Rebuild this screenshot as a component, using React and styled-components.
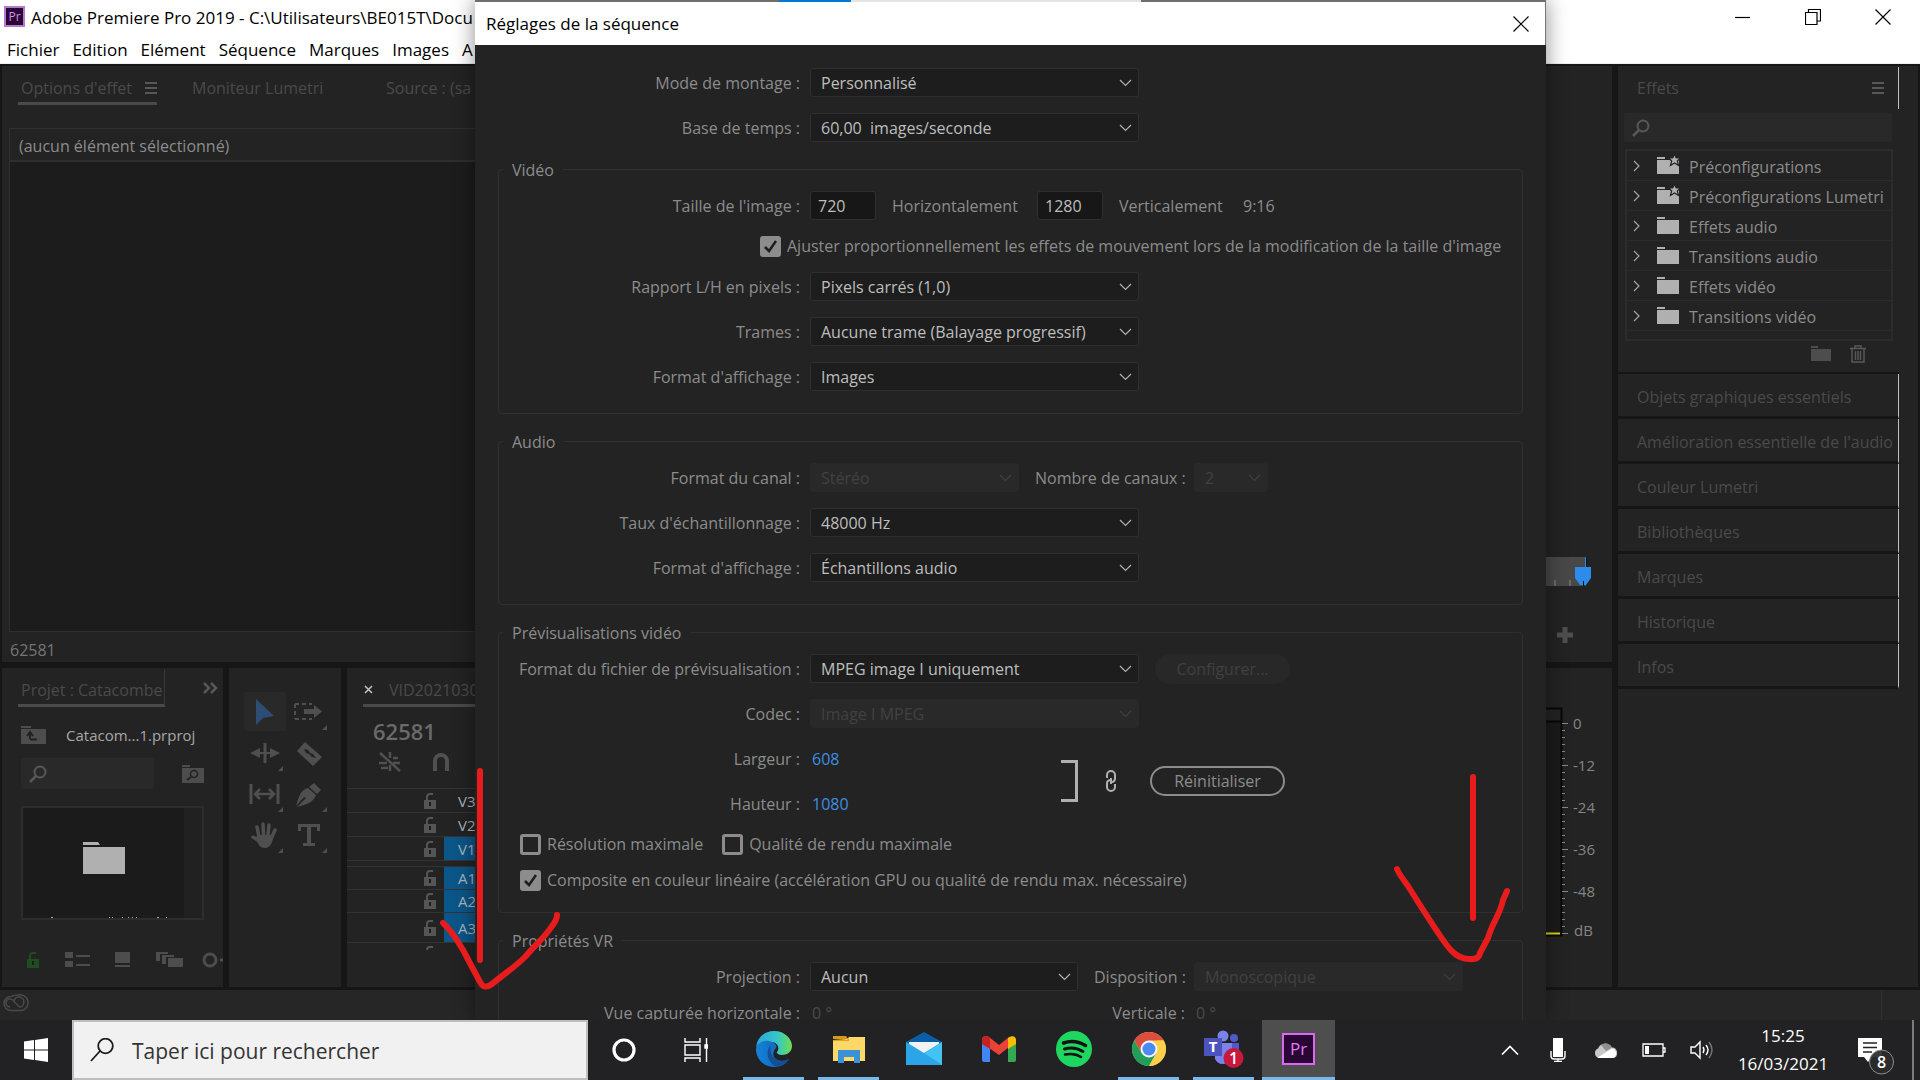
import React from "react";
import styled, { createGlobalStyle } from "styled-components";

const effects = [
  { name: "Préconfigurations", star: true },
  { name: "Préconfigurations Lumetri", star: true },
  { name: "Effets audio" },
  { name: "Transitions audio" },
  { name: "Effets vidéo" },
  { name: "Transitions vidéo" },
];

const closedPanels = [
  "Objets graphiques essentiels",
  "Amélioration essentielle de l'audio",
  "Couleur Lumetri",
  "Bibliothèques",
  "Marques",
  "Historique",
  "Infos",
];

const menus = ["Fichier", "Edition", "Elément", "Séquence", "Marques", "Images", "A"];

const tracks = [
  { name: "V3", height: 24 },
  { name: "V2", height: 24 },
  { name: "V1", height: 24, on: true },
  { name: "", height: 6 },
  { name: "A1", height: 23, on: true },
  { name: "A2", height: 23, on: true },
  { name: "A3", height: 30, on: true },
];

export default function App() {
  return (
    <Screen>
      <GlobalStyle />
      <Desktop>
        <TitleBar>
          <PrBadge />
          <AppTitle>Adobe Premiere Pro 2019 - C:\Utilisateurs\BE015T\Docu</AppTitle>
          <WindowButtons />
        </TitleBar>
        <MenuBar>
          {menus.map((m) => (
            <MenuItem key={m}>{m}</MenuItem>
          ))}
        </MenuBar>
        <Workspace>
          <MainColumn>
            <TopPanels>
              <EffectOptions />
              <Monitor />
            </TopPanels>
            <BottomPanels>
              <Project />
              <Tools />
              <Timeline />
              <Meters />
            </BottomPanels>
          </MainColumn>
          <SideColumn />
        </Workspace>
        <StatusBar>
          <CloudIcon />
          <StatusEnd />
        </StatusBar>
        <SequenceDialog />
      </Desktop>
      <Taskbar />
      <Drawing viewBox="0 0 1920 1080" aria-hidden="true">
        <path d="M480 771V960" />
        <path d="M443 923C450 929 456 938 463 950L480 982Q484 990 492 984C504 974 515 967 525 957C536 944 546 936 552 926Q557 920 557 915" />
        <path d="M1473 777V918" />
        <path d="M1397 869Q1399 874 1408 886C1418 902 1428 918 1439 934C1448 948 1456 959 1469 959Q1479 960 1480 953L1488 938C1492 923 1500 915 1503 900L1507 891" />
      </Drawing>
    </Screen>
  );
}

/* Windows around the application */

function WindowButtons() {
  return (
    <WinButtons>
      <WinButton aria-label="Réduire">
        <Line16 viewBox="0 0 16 16"><path d="M0 8.5h15" /></Line16>
      </WinButton>
      <WinButton aria-label="Restaurer">
        <Line16 viewBox="0 0 16 16"><path d="M.5 3.500h11.500v12h-11.500zM3.500 3.500v-3h12v11.500h-3" /></Line16>
      </WinButton>
      <WinButton aria-label="Fermer">
        <Line16 viewBox="0 0 16 16"><path d="M.5 .5l15 15M15.500 .5l-15 15" /></Line16>
      </WinButton>
    </WinButtons>
  );
}

function EffectOptions() {
  return (
    <OptionsPanel>
      <Tabs>
        <Tab $active $w="139px">
          Options d'effet
          <Burger />
        </Tab>
        <Tab $w="162px">Moniteur Lumetri</Tab>
        <Tab>Source : (sa</Tab>
      </Tabs>
      <OptionsBox>
        <OptionsHead>(aucun élément sélectionné)</OptionsHead>
      </OptionsBox>
      <Timecode>62581</Timecode>
    </OptionsPanel>
  );
}

function Monitor() {
  return (
    <MonitorPanel>
      <Ruler>
        <svg width="60" height="29" viewBox="0 0 60 29">
          <path d="M9 23v6M24 23v6M39 23v6" stroke="#8a8a8a" />
          <path d="M54.500 0v12" stroke="#2d8ceb" />
          <path d="M55.500 0v12" stroke="#111" />
          <path d="M44 10h16v11l-5 7h-6l-5-7z" fill="#2d8ceb" />
          <path d="M52.500 24v5" stroke="#111" />
        </svg>
      </Ruler>
      <PlainButton aria-label="Ajouter">
        <svg width="18" height="18" viewBox="0 0 18 18"><path d="M9 1v16M1 9h16" stroke="#4e4e4e" strokeWidth="5" /></svg>
      </PlainButton>
    </MonitorPanel>
  );
}

function Project() {
  return (
    <ProjectPanel>
      <ProjectTabs>
        <Tab $active $w="147px" $line>Projet : Catacombe</Tab>
        <svg width="16" height="12" viewBox="0 0 16 12" fill="none" stroke="#585858" strokeWidth="2.500"><path d="M1 1l5 5-5 5M8 1l5 5-5 5" /></svg>
      </ProjectTabs>
      <ProjectBody>
        <ProjectName>
          <svg width="25" height="20" viewBox="0 0 25 20">
            <path d="M0 1h10v2H0zM0 4h25v15H0z" fill="#4d4d4d" />
            <path d="M9 14V8M6 11l3-4 3 4M9 14.500h7" stroke="#222" strokeWidth="2" fill="none" />
          </svg>
          Catacom...1.prproj
        </ProjectName>
        <ProjectSearch>
          <SearchBox $w="133px">
            <Magnifier />
            <input type="text" aria-label="Rechercher dans le projet" />
          </SearchBox>
          <svg width="22" height="18" viewBox="0 0 22 18">
            <path d="M0 0h8v2H0zM0 3h22v15H0z" fill="#4d4d4d" />
            <circle cx="12" cy="9" r="3.500" fill="none" stroke="#222" strokeWidth="1.500" />
            <path d="M9 12l-4 3" stroke="#222" strokeWidth="2" />
          </svg>
        </ProjectSearch>
        <Bin>
          <svg width="161" height="110" viewBox="0 0 161 110">
            <path d="M60 34h15l2 3H60zM60 39h42v27H60z" fill="#b0b0b0" />
            <path d="M28 109.500h2M86 109.500h1M89 109.500h1M99 109.500h1M105 109.500h1M109 109.500h1M113 109.500h1M134 109.500h2M143 109.500h1" stroke="#aaa" />
          </svg>
        </Bin>
      </ProjectBody>
      <ProjectFooter>
        <Lock $green />
        <svg width="25" height="16" viewBox="0 0 25 16" fill="#4d4d4d"><path d="M0 0h8v6H0zM0 9h8v6H0zM11 3h14v2H11zM11 12h14v2H11z" /></svg>
        <svg width="16" height="16" viewBox="0 0 16 16" fill="#4d4d4d"><path d="M0 0h15v11H0zM0 13h15v2H0z" /></svg>
        <ZoomGroup>
          <svg width="28" height="16" viewBox="0 0 28 16" fill="#4d4d4d"><path d="M0 0h12v2H4v7H0zM6 3h12v2h-8v7H6zM12 6h15v9H12z" /></svg>
          <svg width="22" height="16" viewBox="0 0 22 16"><circle cx="8" cy="8" r="6" fill="none" stroke="#4d4d4d" strokeWidth="3" /><path d="M18 8h4" stroke="#4d4d4d" strokeWidth="3" /></svg>
        </ZoomGroup>
      </ProjectFooter>
    </ProjectPanel>
  );
}

const toolIcons = [
  { name: "Sélection", on: true, art: <path d="M7 3v26l7-7 11-2z" fill="#2d4d74" /> },
  {
    name: "Sélection en avant",
    art: (
      <>
        <path d="M2 8h17M2 8v15M2 23h17" fill="none" stroke="#4f4f4f" strokeWidth="2" strokeDasharray="4 3" />
        <path d="M11 13h10V9l8 6.500-8 6.500v-4H11z" fill="#4f4f4f" />
      </>
    ),
    corner: true,
  },
  {
    name: "Propagation",
    art: <path d="M1 16l10-5v4h3.500V6h3v9H21v-4l10 5-10 5v-4h-3.500v9h-3v-9H11v4z" fill="#4f4f4f" />,
    corner: true,
  },
  {
    name: "Cutter",
    art: (
      <>
        <path d="M12 5l17 15-9 9L4 14z" fill="#4f4f4f" />
        <path d="M11 12l4 1 2 3 3 1 3 4-4-1-3-3-3-1z" fill="#222" />
      </>
    ),
  },
  {
    name: "Déplacer dessous",
    art: (
      <>
        <path d="M2 6v20M29 6v20" stroke="#4f4f4f" strokeWidth="3" />
        <path d="M6 16h19M11 11l-5 5 5 5M20 11l5 5-5 5" fill="none" stroke="#4f4f4f" strokeWidth="2.500" />
      </>
    ),
    corner: true,
  },
  {
    name: "Plume",
    art: (
      <>
        <path d="M21 5l7 7-4 4-8-7zM15 10l8 7c-3 8-9 9-19 12l9-9-2-1-8 9C6 19 7 12 15 10z" fill="#4f4f4f" />
      </>
    ),
    corner: true,
  },
  {
    name: "Main",
    art: (
      <>
        <path d="M10 18L8 8M14.500 16L14 5M19 16l1-10M22 20l4-9M10 22l-6-4" stroke="#4f4f4f" strokeWidth="3.500" strokeLinecap="round" />
        <path d="M8 16h14l2 1c0 5-2 12-8 12s-7-5-9-9z" fill="#4f4f4f" />
      </>
    ),
    corner: true,
  },
  { name: "Texte", art: <path d="M5 5h22v7h-3V8h-6v16h4v3H10v-3h4V8H8v4H5z" fill="#4f4f4f" />, corner: true },
];

function Tools() {
  return (
    <ToolsPanel>
      {toolIcons.map((t) => (
        <ToolButton key={t.name} aria-label={t.name} $on={t.on}>
          <svg width="36" height="36" viewBox="-2 -2 36 36">
            {t.art}
            {t.corner && <path d="M34 29v5h-5z" fill="#4f4f4f" />}
          </svg>
        </ToolButton>
      ))}
    </ToolsPanel>
  );
}

function Timeline() {
  return (
    <TimelinePanel>
      <TimelineTabs>
        <TimelineTab>
          <svg width="9" height="9" viewBox="0 0 9 9" stroke="#c4c4c4" strokeWidth="1.500"><path d="M1 1l7 7M8 1l-7 7" /></svg>
          <span>VID2021030</span>
        </TimelineTab>
      </TimelineTabs>
      <BigTimecode>62581</BigTimecode>
      <TimelineIcons>
        <svg width="22" height="20" viewBox="0 0 22 20" stroke="#505050" strokeWidth="2.500"><path d="M1 1l20 18M8 11H0M2 16h7M11 0v6M14 11h7M11 13v6M14 6h5" fill="none" /></svg>
        <svg width="18" height="20" viewBox="0 0 18 20" fill="none" stroke="#505050" strokeWidth="4"><path d="M3 19V9a6 6 0 0 1 12 0v10" /></svg>
      </TimelineIcons>
      <TrackList>
        {tracks.map((t) => (
          <Track key={t.name} $h={t.height}>
            {t.name && (
              <>
                <Lock />
                <TrackName $on={t.on}>{t.name}</TrackName>
              </>
            )}
          </Track>
        ))}
        <CutTrack>
          <Lock />
        </CutTrack>
      </TrackList>
    </TimelinePanel>
  );
}

function Meters() {
  const labels = ["0", "-12", "-24", "-36", "-48"];
  const ticks = [];
  for (let i = 0; i <= 30; i++) ticks.push(i);
  return (
    <MetersPanel>
      <svg width="100" height="240" viewBox="0 0 100 240">
        <rect x="0" y="15" width="49" height="213" fill="#1b1b1b" />
        <path d="M0 1.500h49.500v227H0M0 14.500h49" fill="none" stroke="#080808" strokeWidth="2" />
        <path d="M0 226.500h48" stroke="#d9d313" strokeWidth="2" />
        {ticks.map((i) => (
          <path key={i} d={`M50 ${i * 7 + 16}.5h${i % 6 ? 3 : 6}`} stroke="#858585" />
        ))}
        {labels.map((l, i) => (
          <text key={l} x="61" y={i * 42 + 22}>{l}</text>
        ))}
        <text x="62" y="229">dB</text>
      </svg>
    </MetersPanel>
  );
}

function SideColumn() {
  return (
    <Side>
      <SideHead>
        Effets
        <Burger />
      </SideHead>
      <SideSearch>
        <Magnifier />
        <input type="text" aria-label="Rechercher un effet" />
      </SideSearch>
      <EffectList>
        {effects.map((e) => (
          <EffectRow key={e.name}>
            <svg width="7" height="12" viewBox="0 0 7 12" fill="none" stroke="#a5a5a5" strokeWidth="1.200"><path d="M1 1l5 5-5 5" /></svg>
            <svg width="24" height="24" viewBox="0 0 24 24">
              <path d="M0 3h8v2H0zM0 6h22v14H0z" fill="#b0b0b0" />
              {e.star && (
                <path d="M17.500 0l1.700 4h4.300l-3.200 3 1.200 4.500-4-2.500-4 2.500L14.700 7l-3.200-3h4.300z" fill="#b0b0b0" stroke="#222" strokeWidth="1.200" />
              )}
            </svg>
            <span>{e.name}</span>
          </EffectRow>
        ))}
      </EffectList>
      <EffectFooter>
        <svg width="20" height="17" viewBox="0 0 20 17" fill="#4d4d4d"><path d="M0 1h7v2H0zM0 4h20v12H0z" /></svg>
        <svg width="16" height="18" viewBox="0 0 16 18" fill="none" stroke="#5a5a5a" strokeWidth="1.400"><path d="M0 3.500h16M5 3V1h6v2M2 4v13h12V4M5.500 6v9M8 6v9M10.500 6v9" /></svg>
      </EffectFooter>
      {closedPanels.map((p) => (
        <ClosedPanel key={p}>{p}</ClosedPanel>
      ))}
    </Side>
  );
}

/* Sequence settings */

function SelectField({ id, value, width, disabled, label }) {
  return (
    <SelectWrap $w={width}>
      <Select id={id} disabled={disabled} aria-label={label} defaultValue={value}>
        <option value={value}>{value}</option>
      </Select>
      <svg width="13" height="8" viewBox="0 0 13 8" fill="none" stroke={disabled ? "#404040" : "#b0b0b0"} strokeWidth="1.200"><path d="M1 1l5.500 5.500L12 1" /></svg>
    </SelectWrap>
  );
}

function Row({ label, id, children, short }) {
  return (
    <Field $short={short}>
      <Label htmlFor={id}>{label}</Label>
      <Controls>{children}</Controls>
    </Field>
  );
}

function Check({ id, label, checked }) {
  return (
    <CheckLabel htmlFor={id}>
      <CheckBox>
        <input type="checkbox" id={id} defaultChecked={checked} />
        {checked && (
          <svg width="13" height="13" viewBox="0 0 13 13" fill="none" stroke="#1e1e1e" strokeWidth="2.500"><path d="M1 7l4 4 7-10" /></svg>
        )}
      </CheckBox>
      {label}
    </CheckLabel>
  );
}

function SequenceDialog() {
  return (
    <Dialog role="dialog" aria-label="Réglages de la séquence">
      <DialogEdge />
      <DialogTitle>
        Réglages de la séquence
        <DialogClose aria-label="Fermer la boîte de dialogue">
          <Line16 viewBox="0 0 16 16"><path d="M.5 .5l15 15M15.500 .5l-15 15" /></Line16>
        </DialogClose>
      </DialogTitle>
      <DialogBody>
        <TopRows>
          <Row label="Mode de montage :" id="mode"><SelectField id="mode" value="Personnalisé" /></Row>
          <Row label="Base de temps :" id="base"><SelectField id="base" value={"60,00\u00a0 images/seconde"} /></Row>
        </TopRows>

        <Group>
          <legend>Vidéo</legend>
          <Rows>
            <Row label="Taille de l'image :" id="imgw">
              <NumberInput id="imgw" type="text" defaultValue="720" />
              <Unit $w="129px">Horizontalement</Unit>
              <NumberInput type="text" defaultValue="1280" aria-label="Verticalement" />
              <Unit $w="108px">Verticalement</Unit>
              <Unit>9:16</Unit>
            </Row>
            <Checks $indent="261px">
              <Check id="scale" checked label="Ajuster proportionnellement les effets de mouvement lors de la modification de la taille d'image" />
            </Checks>
            <Row label="Rapport L/H en pixels :" id="ratio"><SelectField id="ratio" value="Pixels carrés (1,0)" /></Row>
            <Row label="Trames :" id="fields"><SelectField id="fields" value="Aucune trame (Balayage progressif)" /></Row>
            <Row label="Format d'affichage :" id="vformat"><SelectField id="vformat" value="Images" /></Row>
          </Rows>
        </Group>

        <Group>
          <legend>Audio</legend>
          <Rows>
            <Row label="Format du canal :" id="channel">
              <SelectField id="channel" value="Stéréo" width="209px" disabled />
              <InlineLabel htmlFor="count" $w="150px">Nombre de canaux :</InlineLabel>
              <SelectField id="count" value="2" width="74px" disabled />
            </Row>
            <Row label="Taux d'échantillonnage :" id="rate"><SelectField id="rate" value="48000 Hz" /></Row>
            <Row label="Format d'affichage :" id="aformat"><SelectField id="aformat" value="Échantillons audio" /></Row>
          </Rows>
        </Group>

        <Group>
          <legend>Prévisualisations vidéo</legend>
          <Rows>
            <Row label="Format du fichier de prévisualisation :" id="preview">
              <SelectField id="preview" value="MPEG image I uniquement" />
              <PillButton disabled>Configurer...</PillButton>
            </Row>
            <Row label="Codec :" id="codec"><SelectField id="codec" value="Image I MPEG" disabled /></Row>
            <SizeBlock>
              <Rows>
                <Row label="Largeur :" id="pw"><HotValue id="pw">608</HotValue></Row>
                <Row label="Hauteur :" id="ph"><HotValue id="ph">1080</HotValue></Row>
              </Rows>
              <svg width="17" height="42" viewBox="0 0 17 42" fill="none" stroke="#b0b0b0" strokeWidth="3"><path d="M0 1.500h15.500v39H0" /></svg>
              <svg width="12" height="22" viewBox="0 0 12 22" fill="none" stroke="#b0b0b0" strokeWidth="2"><path d="M2 8V5a3.500 3.500 0 0 1 8 0v4a3.500 3.500 0 0 1-4 3M10 14v3a3.500 3.500 0 0 1-8 0v-4a3.500 3.500 0 0 1 4-3M6 8v6" /></svg>
              <PillButton>Réinitialiser</PillButton>
            </SizeBlock>
            <Checks $indent="21px">
              <Check id="maxres" label="Résolution maximale" />
              <Check id="maxq" label="Qualité de rendu maximale" />
            </Checks>
            <Checks $indent="21px">
              <Check id="linear" checked label="Composite en couleur linéaire (accélération GPU ou qualité de rendu max. nécessaire)" />
            </Checks>
          </Rows>
        </Group>

        <Group>
          <legend>Propriétés VR</legend>
          <Rows>
            <Row label="Projection :" id="proj">
              <SelectField id="proj" value="Aucun" width="268px" />
              <InlineLabel htmlFor="layout" $w="91px">Disposition :</InlineLabel>
              <SelectField id="layout" value="Monoscopique" width="269px" disabled />
            </Row>
            <Row label="Vue capturée horizontale :" id="viewh" short>
              <HotValue id="viewh" $w="268px" disabled>0 °</HotValue>
              <InlineLabel htmlFor="viewv" $w="91px">Verticale :</InlineLabel>
              <HotValue id="viewv" disabled>0 °</HotValue>
            </Row>
          </Rows>
        </Group>
      </DialogBody>
    </Dialog>
  );
}

/* Taskbar */

function Taskbar() {
  return (
    <Bar>
      <StartButton aria-label="Démarrer">
        <svg width="24" height="24" viewBox="0 0 24 24" fill="#fff"><path d="M0 3.500l10-1.400v9.400H0zM11 2l13-2v11.500H11zM0 12.500h10v9.400L0 20.500zM11 12.500h13V24l-13-2z" /></svg>
      </StartButton>
      <TaskSearch>
        <svg width="24" height="24" viewBox="0 0 24 24" fill="none" stroke="#1b1b1b" strokeWidth="1.800"><circle cx="15.500" cy="8" r="7.300" /><path d="M10 13L1 23" /></svg>
        <input type="text" placeholder="Taper ici pour rechercher" aria-label="Taper ici pour rechercher" />
      </TaskSearch>
      <SystemButton aria-label="Cortana">
        <svg width="24" height="24" viewBox="0 0 24 24"><circle cx="12" cy="12" r="10" fill="none" stroke="#fff" strokeWidth="3.200" /></svg>
      </SystemButton>
      <SystemButton aria-label="Affichage des tâches">
        <svg width="24" height="24" viewBox="0 0 24 24" fill="none" stroke="#fff" strokeWidth="1.400"><path d="M1 0v4h15V0M1 7h15v10H1zM1 24v-4h15v4M22.500 0v24" /><path d="M21 7h3v3h-3z" fill="#fff" /></svg>
      </SystemButton>
      <Apps>
        <AppButton aria-label="Edge" $open>
          <svg width="36" height="36" viewBox="0 0 36 36">
            <defs>
              <linearGradient id="edgeTop" x1="0" x2="1"><stop offset="0" stopColor="#2aa6dd" /><stop offset=".6" stopColor="#36c6c9" /><stop offset="1" stopColor="#6fe04b" /></linearGradient>
              <linearGradient id="edgeSide" x1="0" x2="1"><stop offset="0" stopColor="#1583d8" /><stop offset="1" stopColor="#0e5cae" /></linearGradient>
            </defs>
            <path d="M0 18C2 10 9 8 14 10c6 2 7 5 6 7-3 3-4 8 0 11 4 3 9 2 13 0-4 6-9 8-15 8C8 36 0 28 0 18z" fill="url(#edgeSide)" />
            <path d="M0 17C1 7 8 0 18 0c11 0 18 8 18 15 0 6-5 9-10 9-4 0-6-2-5-3 3-4 1-9-5-10C9 8 2 11 0 17z" fill="url(#edgeTop)" />
            <path d="M15 14c-6 5-4 18 6 22 6-1 10-4 12-8-6 3-13 2-16-2-3-4-3-8-2-12z" fill="#124f94" />
          </svg>
        </AppButton>
        <AppButton aria-label="Explorateur" $open>
          <svg width="32" height="28" viewBox="0 0 32 28"><path d="M0 1h13l2 3H0z" fill="#d9980f" /><path d="M0 5l14-1 2-2h16v24H0z" fill="#fdd767" /><path d="M0 5h14l2-2v3H0z" fill="#e5a61c" /><path d="M5 15h22v13h-6v-6H11v6H5z" fill="#3a93d6" /></svg>
        </AppButton>
        <AppButton aria-label="Courrier">
          <svg width="36" height="36" viewBox="0 0 36 36"><path d="M0 11L18 1l18 10v6H0z" fill="#0a5ea8" /><path d="M3 11h30v12H3z" fill="#f2f2f2" /><path d="M0 11l18 11 18-11v23H0z" fill="#2ba5e8" /><path d="M36 11L18 22l18 12z" fill="#43c2f4" /></svg>
        </AppButton>
        <AppButton aria-label="Gmail">
          <svg width="34" height="26" viewBox="0 0 34 26"><path d="M0 3h8v23H2q-2 0-2-2z" fill="#4285f4" /><path d="M26 3h8v21q0 2-2 2h-6z" fill="#34a853" /><path d="M0 4c0-4 4-5 7-3l10 8 10-8v10L17 19 7 12z" fill="#ea4335" /><path d="M0 4c0-4 4-5 8-2v11L0 8z" fill="#c5221f" /><path d="M34 4c0-4-4-5-8-2v11l8-5z" fill="#fbbc04" /></svg>
        </AppButton>
        <AppButton aria-label="Spotify">
          <svg width="36" height="36" viewBox="0 0 36 36" fill="none" stroke="#111" strokeLinecap="round"><circle cx="18" cy="18" r="18" fill="#1ed760" stroke="none" /><path d="M7.500 12q11-4 22 2.500" strokeWidth="3.500" /><path d="M8.500 18q10-3 18.500 2.500" strokeWidth="3" /><path d="M9 23.500q9-2 16 2.500" strokeWidth="2.500" /></svg>
        </AppButton>
        <AppButton aria-label="Chrome" $open>
          <svg width="34" height="34" viewBox="0 0 34 34"><circle cx="17" cy="17" r="17" fill="#fdd04a" /><path d="M2.300 8.500a17 17 0 0 1 29.400 0H17L9.600 21.200z" fill="#dc4c3f" /><path d="M2.300 8.500L9.600 21.300 17 25.500 24.400 21.300 17 34A17 17 0 0 1 2.300 8.500z" fill="#1f9f5b" /><path d="M17 34l7.400-12.800L24.400 8.500h7.300A17 17 0 0 1 17 34z" fill="#fdd04a" /><circle cx="17" cy="17" r="8.500" fill="#f5f5f5" /><circle cx="17" cy="17" r="6.500" fill="#4a8af4" /></svg>
        </AppButton>
        <AppButton aria-label="Teams" $open>
          <svg width="40" height="38" viewBox="0 0 40 38">
            <circle cx="19" cy="6" r="5.500" fill="#7b83eb" /><circle cx="30" cy="8" r="4" fill="#5059c9" />
            <path d="M22 13h13v12q-2 6-9 5z" fill="#5059c9" /><path d="M11 13h17v13a9 9 0 0 1-17 3z" fill="#7b83eb" /><path d="M0 8h18v18H0z" fill="#4b53bc" />
            <text x="9" y="22" fontSize="15" fontWeight="700" fill="#fff" textAnchor="middle">T</text>
            <circle cx="29.500" cy="28" r="10" fill="#c8183c" />
            <text x="29.500" y="34" fontSize="16" fontWeight="600" fill="#fff" textAnchor="middle">1</text>
          </svg>
        </AppButton>
        <AppButton aria-label="Premiere Pro" $open $current>
          <svg width="33" height="32" viewBox="0 0 33 32"><rect x="1" y="1" width="31" height="30" fill="#2a0634" stroke="#d869f0" strokeWidth="2" /><text x="16.500" y="22" fontSize="17" fill="#e07bf5" textAnchor="middle">Pr</text></svg>
        </AppButton>
      </Apps>
      <Tray>
        <TrayButton aria-label="Icônes cachées">
          <svg width="18" height="10" viewBox="0 0 18 10" fill="none" stroke="#fff" strokeWidth="1.600"><path d="M1 9.500l8-8 8 8" /></svg>
        </TrayButton>
        <TrayButton aria-label="Micro">
          <svg width="16" height="24" viewBox="0 0 16 24" fill="none" stroke="#fff" strokeWidth="1.400"><path d="M3 0h10v19H3z" fill="#fff" stroke="none" /><path d="M1 13v5q0 3 3 3h8q3 0 3-3v-5M8 21v3M4 23.500h8" /></svg>
        </TrayButton>
        <TrayButton aria-label="OneDrive">
          <svg width="24" height="17" viewBox="0 0 24 17"><path d="M5 16a5 5 0 0 1-1-9.500 8 8 0 0 1 14-1 5.400 5.400 0 0 1 1.500 10.500z" fill="#c8c8c8" /><path d="M7 3a7 7 0 0 1 11 2.500L12 9z" fill="#8f8f8f" /><path d="M3 16l15-9.500A5 5 0 0 1 19 16z" fill="#fff" /></svg>
        </TrayButton>
        <TrayButton aria-label="Batterie">
          <svg width="24" height="14" viewBox="0 0 24 14" fill="none" stroke="#fff" strokeWidth="1.300"><path d="M1 1h20v12H1zM21 5h2v4h-2" /><path d="M3 3h4v8H3z" fill="#fff" stroke="none" /></svg>
        </TrayButton>
        <TrayButton aria-label="Volume">
          <svg width="24" height="20" viewBox="0 0 24 20" fill="none" stroke="#fff" strokeWidth="1.400"><path d="M1 7h4l5-5v16l-5-5H1zM13 7q2 3 0 6M16 5q4 5 0 10" /><path d="M19 2q6 8 0 16" stroke="#777" /></svg>
        </TrayButton>
        <Clock>
          <span>15:25</span>
          <span>16/03/2021</span>
        </Clock>
        <NotifButton aria-label="Notifications">
          <svg width="36" height="37" viewBox="0 0 36 37">
            <path d="M0 0h24v19H14l-4 5-4-5H0z" fill="#fff" /><path d="M5 5h14M5 9.500h14M5 14h9" stroke="#222" strokeWidth="1.400" />
            <circle cx="23.500" cy="24" r="12" fill="#2b2b2b" fillOpacity=".93" stroke="#8d8d8d" />
            <text x="23.500" y="30" fontSize="16" fontWeight="600" fill="#fff" textAnchor="middle">8</text>
          </svg>
        </NotifButton>
        <ShowDesktop aria-label="Afficher le bureau" />
      </Tray>
    </Bar>
  );
}

/* Small shared drawings */

function Burger() {
  return (
    <svg width="12" height="12" viewBox="0 0 12 12" fill="#585858"><path d="M0 0h12v2H0zM0 5h12v2H0zM0 10h12v2H0z" /></svg>
  );
}

function Magnifier() {
  return (
    <svg width="18" height="18" viewBox="0 0 18 18" fill="none" stroke="#585858" strokeWidth="2"><circle cx="11" cy="7" r="5.500" /><path d="M7 11l-6 6" strokeWidth="2.500" /></svg>
  );
}

function Lock({ $green }) {
  return (
    <svg width="14" height="16" viewBox="0 0 14 16">
      <path d="M4 7V4q0-3 3-3h3" fill="none" stroke={$green ? "#1f4d1f" : "#555"} strokeWidth="2" />
      <path d="M1 7h12v9H1z" fill={$green ? "#1f4d1f" : "#555"} />
      <path d="M7 9v4" stroke="#1c1c1c" strokeWidth="2" />
    </svg>
  );
}

function PrBadge() {
  return (
    <svg width="21" height="21" viewBox="0 0 21 21"><rect x="1" y="1" width="19" height="19" fill="#2a0634" stroke="#b47ad0" strokeWidth="2" /><text x="10.500" y="15" fontSize="12" fill="#d98cf0" textAnchor="middle">Pr</text></svg>
  );
}

function CloudIcon() {
  return (
    <svg width="26" height="18" viewBox="0 0 26 18" fill="none" stroke="#4a4a4a" strokeWidth="1.500"><path d="M8 16.500a7 7 0 0 1 0-14q3-1.500 7-1.500a8 8 0 0 1 4 15.500zM7 13a4 4 0 1 1 3-6.500l6 6M11 7a5 5 0 1 1 5 6" /></svg>
  );
}

const GlobalStyle = createGlobalStyle`
  * {
    box-sizing: border-box;
  }
  body {
    margin: 0;
    overflow: hidden;
    background: #161616;
    font-family: "Open Sans", "Noto Sans", sans-serif;
    font-size: 16px;
    line-height: 20px;
    color: #8c8c8c;
  }
  button, input, select {
    font: inherit;
    color: inherit;
    margin: 0;
  }
  button {
    padding: 0;
    border: none;
    background: none;
  }
  svg {
    display: block;
    flex: none;
  }
`;

const Screen = styled.div`
  position: relative;
  display: flex;
  flex-direction: column;
  height: 100vh;
`;

const Drawing = styled.svg`
  position: absolute;
  inset: 0;
  width: 100%;
  height: 100%;
  pointer-events: none;
  fill: none;
  stroke: #e81c1c;
  stroke-width: 6;
  stroke-linecap: round;
  stroke-linejoin: round;
`;

const Desktop = styled.div`
  position: relative;
  flex: 1;
  min-height: 0;
  display: flex;
  flex-direction: column;
  overflow: hidden;
`;

const TitleBar = styled.header`
  display: flex;
  align-items: center;
  gap: 6px;
  height: 33px;
  padding: 0 2px 0 4px;
  background: #fff;
`;

const AppTitle = styled.span`
  flex: 1;
  padding-top: 2px;
  font-size: 17px;
  color: #000;
  white-space: nowrap;
`;

const WinButtons = styled.div`
  display: flex;
  height: 100%;
`;

const WinButton = styled.button`
  width: 70px;
  display: flex;
  align-items: center;
  justify-content: center;
`;

const Line16 = styled.svg`
  width: 16px;
  height: 16px;
  fill: none;
  stroke: #000;
  stroke-width: 1.2;
`;

const MenuBar = styled.nav`
  display: flex;
  align-items: center;
  gap: 13px;
  height: 31px;
  padding: 3px 7px 0;
  background: #fff;
  border-bottom: 1px solid #eee;
`;

const MenuItem = styled.button`
  font-size: 17px;
  color: #000;
`;

const Workspace = styled.main`
  flex: 1;
  min-height: 0;
  display: grid;
  grid-template-columns: minmax(0, 1fr) 300px;
  gap: 6px;
  padding: 2px 2px 3px;
`;

const MainColumn = styled.div`
  display: flex;
  flex-direction: column;
  gap: 6px;
  min-height: 0;
`;

const TopPanels = styled.div`
  flex: 1;
  display: flex;
  gap: 6px;
  min-height: 0;
`;

const BottomPanels = styled.div`
  flex: 0 0 319px;
  display: flex;
  gap: 6px;
`;

const Panel = styled.section`
  background: #232323;
  overflow: hidden;
`;

const OptionsPanel = styled(Panel)`
  flex: 1;
  display: flex;
  flex-direction: column;
`;

const Tabs = styled.div`
  display: flex;
  gap: 32px;
  height: 39px;
  padding: 2px 16px 0;
  color: #4a4a4a;
  white-space: nowrap;
`;

const Tab = styled.div`
  display: flex;
  align-items: center;
  justify-content: space-between;
  width: ${(props) => props.$w || "auto"};
  padding: 5px 0 0 3px;
  border-bottom: 3px solid ${(props) => (props.$active ? "#4a4a4a" : "transparent")};
  border-right: ${(props) => (props.$line ? "1px solid #3a3a3a" : "none")};
`;

const OptionsBox = styled.div`
  flex: 1;
  margin: 23px 7px 0;
  background: #1c1c1c;
  border: 1px solid #303030;
`;

const OptionsHead = styled.div`
  height: 33px;
  padding: 7px 9px;
  line-height: 20px;
  background: #232323;
  border-bottom: 2px solid #2e2e2e;
`;

const Timecode = styled.div`
  height: 30px;
  padding: 8px 8px 0;
  color: #757575;
`;

const MonitorPanel = styled(Panel)`
  flex: 1;
  display: flex;
  flex-direction: column;
  justify-content: flex-end;
  align-items: flex-end;
  gap: 40px;
  padding: 0 21px 18px;
`;

const Ruler = styled.div`
  display: flex;
  justify-content: flex-end;
  width: 100%;
  height: 29px;
  background: linear-gradient(to left, transparent 5px, #484848 5px);
`;

const PlainButton = styled.button`
  margin-right: 17px;
`;

const ProjectPanel = styled(Panel)`
  flex: 0 0 221px;
  display: flex;
  flex-direction: column;
`;

const ProjectTabs = styled.div`
  display: flex;
  align-items: center;
  justify-content: space-between;
  height: 39px;
  padding: 0 4px 0 16px;
  color: #4a4a4a;
  ${Tab} {
    height: 37px;
    margin-top: 2px;
    white-space: nowrap;
  }
`;

const ProjectBody = styled.div`
  flex: 1;
  display: flex;
  flex-direction: column;
  padding: 18px 19px 0;
`;

const ProjectName = styled.div`
  display: flex;
  align-items: center;
  gap: 20px;
  height: 20px;
  font-size: 15px;
  color: #a8a8a8;
  white-space: nowrap;
`;

const ProjectSearch = styled.div`
  display: flex;
  align-items: center;
  justify-content: space-between;
  margin: 13px 0 17px;
`;

const SearchBox = styled.div`
  display: flex;
  align-items: center;
  gap: 6px;
  width: ${(props) => props.$w || "auto"};
  height: 31px;
  padding: 0 8px;
  background: #292929;
  border-radius: 2px;
  input {
    flex: 1;
    min-width: 0;
    border: none;
    background: none;
    outline: none;
  }
`;

const Bin = styled.div`
  height: 114px;
  border: 2px solid #2d2d2d;
  background: linear-gradient(to right, #1b1b1b 161px, #212121 161px);
`;

const ProjectFooter = styled.div`
  display: flex;
  align-items: center;
  gap: 25px;
  height: 54px;
  padding: 0 0 0 24px;
`;

const ZoomGroup = styled.div`
  display: flex;
  gap: 18px;
`;

const ToolsPanel = styled(Panel)`
  flex: 0 0 112px;
  display: grid;
  grid-template-columns: 42px 42px;
  grid-auto-rows: 39px;
  align-content: start;
  justify-content: start;
  gap: 2px;
  padding: 24px 0 0 15px;
`;

const ToolButton = styled.button`
  display: flex;
  align-items: center;
  justify-content: center;
  border-radius: 3px;
  background: ${(props) => (props.$on ? "#292929" : "none")};
`;

const TimelinePanel = styled(Panel)`
  flex: 1;
  min-width: 0;
`;

const TimelineTabs = styled.div`
  height: 39px;
  padding: 2px 16px 0;
`;

const TimelineTab = styled.div`
  display: flex;
  align-items: center;
  gap: 16px;
  height: 37px;
  padding-top: 5px;
  border-bottom: 3px solid #4a4a4a;
  color: #4a4a4a;
  svg {
    margin-left: 1px;
  }
`;

const BigTimecode = styled.div`
  padding: 11px 26px 0;
  font-size: 22px;
  line-height: 26px;
  font-weight: 600;
  color: #6a6a6a;
`;

const TimelineIcons = styled.div`
  display: flex;
  gap: 31px;
  height: 44px;
  padding: 8px 32px 0;
`;

const TrackList = styled.div`
  border-top: 1px solid #333;
`;

const Track = styled.div`
  display: flex;
  align-items: center;
  gap: 7px;
  height: ${(props) => props.$h}px;
  padding-left: 76px;
  border-bottom: 1px solid #333;
`;

const CutTrack = styled.div`
  height: 7px;
  padding: 3px 0 0 76px;
  overflow: hidden;
`;

const TrackName = styled.span`
  display: flex;
  align-items: center;
  height: 100%;
  width: 60px;
  padding-left: 14px;
  font-size: 15px;
  color: #a8b4bc;
  background: ${(props) => (props.$on ? "#0b5688" : "none")};
`;

const MetersPanel = styled(Panel)`
  flex: 0 0 100px;
  padding-top: 39px;
  text {
    font-size: 15px;
    fill: #858585;
  }
`;

const Side = styled(Panel)`
  display: flex;
  flex-direction: column;
`;

const SideHead = styled.div`
  display: flex;
  align-items: center;
  justify-content: space-between;
  height: 42px;
  margin: 1px 19px 4px 0;
  padding: 0 14px 0 19px;
  border-right: 1px solid #c0c0c0;
  color: #4a4a4a;
`;

const SideSearch = styled(SearchBox)`
  height: 29px;
  margin: 0 26px 7px 6px;
`;

const EffectList = styled.div`
  height: 192px;
  margin: 0 25px 0 7px;
  border: 2px solid #2c2c2c;
`;

const EffectRow = styled.div`
  display: flex;
  align-items: center;
  height: 30px;
  padding-left: 6px;
  border-bottom: 1px solid #2b2b2b;
  white-space: nowrap;
  svg + svg {
    margin: 0 8px 0 17px;
  }
  span {
    padding-top: 3px;
  }
`;

const EffectFooter = styled.div`
  display: flex;
  align-items: center;
  justify-content: flex-end;
  gap: 19px;
  height: 33px;
  margin-right: 19px;
  padding: 0 33px 6px 0;
  border-bottom: 2px solid #161616;
`;

const ClosedPanel = styled.button`
  display: flex;
  align-items: center;
  height: 45px;
  margin-right: 19px;
  padding: 3px 0 0 19px;
  border-bottom: 3px solid #161616;
  border-right: 1px solid #c0c0c0;
  color: #4a4a4a;
  white-space: nowrap;
`;

const StatusBar = styled.footer`
  display: flex;
  align-items: center;
  justify-content: space-between;
  flex: none;
  height: 30px;
  padding: 0 0 4px 3px;
  background: #262626;
`;

const StatusEnd = styled.div`
  width: 39px;
  height: 30px;
  margin-top: 4px;
  border-left: 1px solid #303030;
`;

const Dialog = styled.div`
  position: absolute;
  top: 0;
  bottom: 0;
  left: 475px;
  right: 374px;
  overflow: clip;
  overflow-clip-margin: 30px;
  background: #232323;
  box-shadow: 0 0 20px rgba(0, 0, 0, 0.45);
`;

const DialogEdge = styled.div`
  height: 2px;
  background: linear-gradient(to right, #6e6e6e 304px, #0078d7 304px, #0078d7 376px, #e5e5e5 376px, #e5e5e5 666px, #6e6e6e 666px);
`;

const DialogTitle = styled.div`
  display: flex;
  align-items: center;
  justify-content: space-between;
  height: 43px;
  padding-left: 11px;
  background: #fff;
  border-right: 1px solid #777;
  color: #000;
  font-size: 17px;
`;

const DialogClose = styled.button`
  padding: 0 16px;
`;

const DialogBody = styled.form`
  display: flex;
  flex-direction: column;
  gap: 16px;
  padding: 23px 23px 0;
`;

const Rows = styled.div`
  display: flex;
  flex-direction: column;
  gap: 16px;
`;

const TopRows = styled(Rows)`
  padding: 0 1px;
`;

const Group = styled.fieldset`
  min-width: 0;
  margin: 0;
  padding: 11px 0 22px;
  border: 1px solid #303030;
  border-radius: 4px;
  legend {
    margin-left: 4px;
    padding: 2px 9px 0;
  }
`;

const Field = styled.div`
  display: grid;
  grid-template-columns: 311px minmax(0, 1fr);
  align-items: center;
  align-content: center;
  height: ${(props) => (props.$short ? 12 : 29)}px;
`;

const Label = styled.label`
  padding-right: 10px;
  text-align: right;
  white-space: nowrap;
`;

const Controls = styled.div`
  display: flex;
  align-items: center;
  gap: 16px;
`;

const InlineLabel = styled.label`
  width: ${(props) => props.$w};
  margin-right: -7px;
  text-align: right;
  white-space: nowrap;
`;

const SelectWrap = styled.div`
  display: grid;
  align-items: center;
  flex: none;
  width: ${(props) => props.$w || "329px"};
  > * {
    grid-area: 1 / 1;
  }
  svg {
    justify-self: end;
    margin-right: 7px;
    pointer-events: none;
  }
`;

const Select = styled.select`
  appearance: none;
  width: 100%;
  height: 29px;
  padding: 0 24px 0 10px;
  border: 1px solid #2f2f2f;
  border-radius: 3px;
  background: #1d1d1d;
  color: #bdbdbd;
  &:disabled {
    background: #292929;
    border-color: #292929;
    color: #414141;
    opacity: 1;
  }
`;

const NumberInput = styled.input`
  width: 66px;
  height: 29px;
  padding: 0 7px;
  border: 1px solid #2f2f2f;
  border-radius: 3px;
  background: #171717;
  color: #bdbdbd;
`;

const Unit = styled.span`
  width: ${(props) => props.$w || "auto"};
  white-space: nowrap;
`;

const Checks = styled.div`
  display: flex;
  gap: 19px;
  height: 20px;
  padding-left: ${(props) => props.$indent};
`;

const CheckLabel = styled.label`
  display: flex;
  align-items: center;
  gap: 6px;
  white-space: nowrap;
`;

const CheckBox = styled.span`
  display: grid;
  place-items: center;
  > * {
    grid-area: 1 / 1;
  }
  input {
    appearance: none;
    width: 21px;
    height: 21px;
    border: 3px solid #8c8c8c;
    border-radius: 3px;
  }
  input:checked {
    background: #8c8c8c;
  }
  svg {
    pointer-events: none;
  }
`;

const PillButton = styled.button`
  width: 135px;
  height: 30px;
  border: 2px solid #8c8c8c;
  border-radius: 15px;
  color: #8c8c8c;
  &:disabled {
    border-color: #282828;
    background: #282828;
    color: #414141;
  }
`;

const SizeBlock = styled.div`
  display: flex;
  align-items: center;
  > div {
    width: 562px;
  }
  svg + svg {
    margin: 0 33px 0 27px;
  }
`;

const HotValue = styled.button`
  width: ${(props) => props.$w || "auto"};
  padding-left: 2px;
  text-align: left;
  color: #3d8fe0;
  &:disabled {
    color: #4a4a4a;
  }
`;

const Bar = styled.footer`
  display: flex;
  flex: none;
  height: 60px;
  background: #222224;
`;

const StartButton = styled.button`
  display: flex;
  align-items: center;
  justify-content: center;
  width: 72px;
`;

const TaskSearch = styled.div`
  display: flex;
  align-items: center;
  gap: 16px;
  width: 516px;
  padding: 0 16px;
  background: #f1f1f1;
  border: 2px solid #bebebe;
  input {
    flex: 1;
    padding: 2px 0 0 2px;
    border: none;
    outline: none;
    background: none;
    font-size: 21px;
  }
  input::placeholder {
    color: #333;
    opacity: 1;
  }
`;

const SystemButton = styled(StartButton)``;

const Apps = styled.div`
  display: flex;
  gap: 2px;
  margin-left: 5px;
`;

const AppButton = styled.button`
  display: grid;
  place-items: center;
  grid-template-rows: 57px 3px;
  width: 73px;
  background: ${(props) => (props.$current ? "#4e4e4e" : "none")};
  &::after {
    content: "";
    width: ${(props) => (props.$current ? "100%" : "61px")};
    height: 3px;
    background: ${(props) => (props.$open ? "#76b9ed" : "none")};
  }
`;

const Tray = styled.div`
  display: flex;
  margin-left: auto;
  color: #fff;
`;

const TrayButton = styled.button`
  display: flex;
  align-items: center;
  justify-content: center;
  width: 48px;
`;

const Clock = styled.div`
  display: flex;
  flex-direction: column;
  align-items: center;
  justify-content: center;
  width: 114px;
  font-size: 17px;
  line-height: 28px;
`;

const NotifButton = styled.button`
  width: 72px;
  padding: 12px 0 0 18px;
`;

const ShowDesktop = styled.button`
  width: 8px;
  border-left: 2px solid #7c7c7c;
`;
